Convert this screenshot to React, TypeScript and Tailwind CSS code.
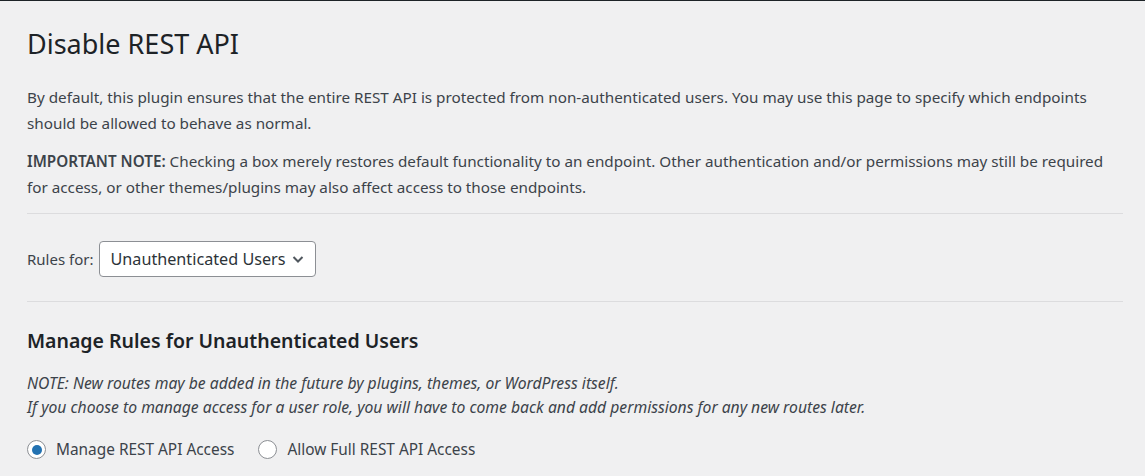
import React from "react";

export default function App() {
  return (
    <div
      className="min-h-[476px] w-full bg-[#f0f0f1] border-t border-[#1d2327] text-[#3c434a]"
      style={{ fontFamily: '"Noto Sans", "Open Sans", sans-serif' }}
    >
      <div className="pl-[27px] pr-[22px] pt-[23px]">
        <h1 className="text-[27px] leading-[40px] text-[#1d2327] font-normal">Disable REST API</h1>

        <p className="mt-[20px] text-[15.25px] leading-[26px]">
          By default, this plugin ensures that the entire REST API is protected from non-authenticated users. You may use this page to specify which endpoints
          <br />
          should be allowed to behave as normal.
        </p>
        <p className="mt-[12px] text-[15.25px] leading-[26px]">
          <strong className="font-semibold">IMPORTANT NOTE:</strong> Checking a box merely restores default functionality to an endpoint. Other authentication and/or permissions may still be required
          <br />
          for access, or other themes/plugins may also affect access to those endpoints.
        </p>

        <hr className="mt-[13px] border-0 border-t border-[#dcdcde]" />

        <div className="mt-[27px] flex items-center gap-[6px] text-[15px]">
          <label htmlFor="rules-for">Rules for:</label>
          <div className="flex h-[36px] w-[217px] items-center justify-between rounded-[4px] border border-[#8c8f94] bg-white pl-[10px] pr-[9px] text-[16.2px] text-[#2c3338]">
            <span id="rules-for">Unauthenticated Users</span>
            <svg width="16" height="16" viewBox="0 0 16 16" fill="none" stroke="#50575e" strokeWidth="2">
              <path d="M3.5 6l4.5 4.5L12.5 6" />
            </svg>
          </div>
        </div>

        <hr className="mt-[24px] border-0 border-t border-[#dcdcde]" />

        <h2 className="mt-[25px] text-[19.5px] leading-[28px] font-semibold text-[#1d2327]">Manage Rules for Unauthenticated Users</h2>

        <p className="mt-[16px] text-[15.7px] leading-[24px] italic">
          NOTE: New routes may be added in the future by plugins, themes, or WordPress itself.
          <br />
          If you choose to manage access for a user role, you will have to come back and add permissions for any new routes later.
        </p>

        <div className="mt-[19px] flex items-center text-[15.4px]">
          <label className="flex items-center">
            <span className="flex h-[19px] w-[19px] items-center justify-center rounded-full border border-[#8c8f94] bg-white">
              <span className="h-[10px] w-[10px] rounded-full bg-[#2271b1]" />
            </span>
            <span className="ml-[10px]">Manage REST API Access</span>
          </label>
          <label className="ml-[24px] flex items-center">
            <span className="h-[19px] w-[19px] rounded-full border border-[#8c8f94] bg-white" />
            <span className="ml-[10px]">Allow Full REST API Access</span>
          </label>
        </div>
      </div>
    </div>
  );
}
